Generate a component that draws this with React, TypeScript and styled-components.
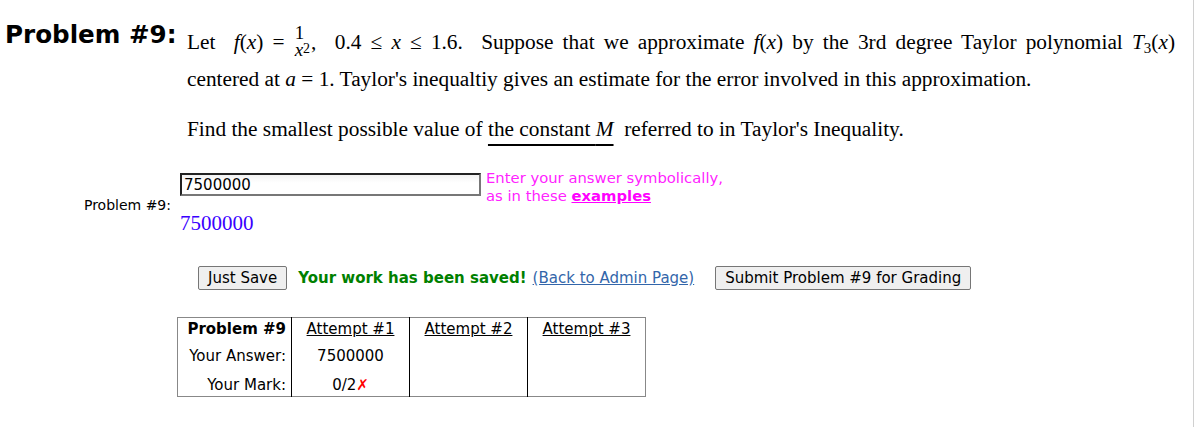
import React from "react";
import styled, { createGlobalStyle } from "styled-components";

const Global = createGlobalStyle`
  html, body { margin: 0; padding: 0; background: #fff; }
  body { font-family: "DejaVu Sans", Verdana, sans-serif; color: #000; }
`;

const Page = styled.div`
  width: 1194px;
  height: 427px;
  box-sizing: border-box;
  border-right: 1px solid #d0d0d0;
  overflow: hidden;
`;

const ProblemHead = styled.section`
  display: flex;
  align-items: flex-start;
`;

const Title = styled.h1`
  flex-shrink: 0;
  width: 182px;
  margin: 21px 0 0 5px;
  font-size: 24.6px;
  line-height: 28px;
  font-weight: bold;
  white-space: nowrap;
`;

const Statement = styled.div`
  width: 988px;
  margin-top: 24px;
  font-family: "Liberation Serif", "Times New Roman", serif;
  font-size: 21.33px;
  line-height: 37px;
`;

const Para = styled.p<{ $gap?: number; $spread?: boolean }>`
  margin: ${(p) => p.$gap ?? 0}px 0 0;
  text-align: ${(p) => (p.$spread ? "justify" : "left")};
  text-align-last: ${(p) => (p.$spread ? "justify" : "auto")};
`;

const V = styled.i`
  font-style: italic;
`;

const Frac = styled.span`
  display: inline-block;
  vertical-align: -7px;
  text-align: center;
  font-size: 19px;
  line-height: 17px;
  margin: 0 1px;
`;

const FracLine = styled.span`
  display: block;
`;

const Sub = styled.sub`
  font-size: 15px;
  line-height: 0;
  vertical-align: -4px;
`;

const Sup = styled.sup`
  font-size: 14px;
  line-height: 0;
  vertical-align: 3px;
`;

const Under = styled.span`
  text-decoration: underline;
  text-decoration-thickness: 2px;
  text-underline-offset: 8px;
`;

const AnswerRow = styled.section`
  display: flex;
  align-items: center;
  margin-top: 25px;
`;

const RowLabel = styled.div`
  width: 171px;
  text-align: right;
  font-size: 14px;
  padding-top: 1px;
`;

const Field = styled.div`
  display: flex;
  flex-direction: column;
  margin-left: 9px;
`;

const InputLine = styled.div`
  display: flex;
  align-items: flex-start;
  height: 23px;
`;

const Input = styled.input`
  box-sizing: border-box;
  width: 301px;
  height: 23px;
  padding: 1px 2px;
  border: 2px solid;
  border-color: #222 #777 #777 #222;
  background: linear-gradient(#f2f2f2, #fff 40%);
  font-family: "DejaVu Sans", Verdana, sans-serif;
  font-size: 15px;
  color: #000;
  outline: none;
`;

const Hint = styled.div`
  margin: -4px 0 0 5px;
  font-size: 14.8px;
  line-height: 18px;
  color: #ff22ff;
  white-space: nowrap;
`;

const HintLink = styled.a`
  color: #ff00ff;
  font-weight: bold;
  text-decoration: underline;
`;

const Echo = styled.div`
  margin-top: 15px;
  font-family: "Liberation Serif", "Times New Roman", serif;
  font-size: 21px;
  line-height: 24px;
  color: #3a00ff;
`;

const ActionRow = styled.section`
  display: flex;
  align-items: center;
  margin: 31px 0 0 198px;
`;

const Button = styled.button`
  box-sizing: border-box;
  height: 24px;
  padding: 0 9px;
  background: #efefef;
  border: 1px solid #767676;
  border-radius: 2px;
  font-family: "DejaVu Sans", Verdana, sans-serif;
  font-size: 15px;
  color: #000;
  white-space: nowrap;
`;

const Saved = styled.span`
  margin-left: 11px;
  font-size: 15px;
  font-weight: bold;
  color: #008000;
  white-space: nowrap;
`;

const AdminLink = styled.a`
  margin-left: 6px;
  font-size: 15px;
  color: #3366aa;
  text-decoration: underline;
  white-space: nowrap;
`;

const SubmitButton = styled(Button)`
  margin-left: 21px;
`;

const Results = styled.table`
  margin: 27px 0 0 177px;
  border: 1px solid #888;
  border-collapse: collapse;
  font-size: 15px;
`;

const Row = styled.tr<{ $pt: number; $pb: number }>`
  & > td {
    padding-top: ${(p) => p.$pt}px;
    padding-bottom: ${(p) => p.$pb}px;
  }
`;

const Cell = styled.td<{ $bold?: boolean; $first?: boolean }>`
  width: ${(p) => (p.$first ? 103 : 107)}px;
  padding-left: 5px;
  padding-right: 5px;
  text-align: ${(p) => (p.$first ? "right" : "center")};
  font-weight: ${(p) => (p.$bold ? "bold" : "normal")};
  border-right: 1px solid #000;
  line-height: 18px;
  white-space: nowrap;
  &:last-child { border-right: none; }
`;

const Attempt = styled.span`
  text-decoration: underline;
`;

const Cross = styled.span`
  color: #ff0000;
`;

export default function App() {
  return (
    <Page>
      <Global />
      <ProblemHead>
        <Title>Problem #9:</Title>
        <Statement>
          <Para $spread>
            Let&nbsp; <V>f</V>(<V>x</V>) ={" "}
            <Frac>
              <FracLine>1</FracLine>
              <FracLine>
                <V>x</V>
                <Sup>2</Sup>
              </FracLine>
            </Frac>
            ,&nbsp; 0.4 ≤ <V>x</V> ≤ 1.6.&nbsp; Suppose that we approximate <V>f</V>(<V>x</V>) by the 3rd
            degree Taylor polynomial <V>T</V>
            <Sub>3</Sub>(<V>x</V>)
          </Para>
          <Para>
            centered at <V>a</V> = 1. Taylor's inequaltiy gives an estimate for the error involved in
            this approximation.
          </Para>
          <Para $gap={13}>
            Find the smallest possible value of{" "}
            <Under>
              the constant <V>M</V>
            </Under>
            &nbsp; referred to in Taylor's Inequality.
          </Para>
        </Statement>
      </ProblemHead>

      <AnswerRow>
        <RowLabel>Problem #9:</RowLabel>
        <Field>
          <InputLine>
            <Input defaultValue="7500000" />
            <Hint>
              Enter your answer symbolically,
              <br />
              as in these <HintLink href="#">examples</HintLink>
            </Hint>
          </InputLine>
          <Echo>7500000</Echo>
        </Field>
      </AnswerRow>

      <ActionRow>
        <Button>Just Save</Button>
        <Saved>Your work has been saved!</Saved>
        <AdminLink href="#">(Back to Admin Page)</AdminLink>
        <SubmitButton>Submit Problem #9 for Grading</SubmitButton>
      </ActionRow>

      <Results>
        <tbody>
          <Row $pt={2} $pb={3}>
            <Cell $first $bold>Problem #9</Cell>
            <Cell><Attempt>Attempt #1</Attempt></Cell>
            <Cell><Attempt>Attempt #2</Attempt></Cell>
            <Cell><Attempt>Attempt #3</Attempt></Cell>
          </Row>
          <Row $pt={6} $pb={3}>
            <Cell $first>Your Answer:</Cell>
            <Cell>7500000</Cell>
            <Cell />
            <Cell />
          </Row>
          <Row $pt={8} $pb={2}>
            <Cell $first>Your Mark:</Cell>
            <Cell>
              0/2<Cross>✗</Cross>
            </Cell>
            <Cell />
            <Cell />
          </Row>
        </tbody>
      </Results>
    </Page>
  );
}
